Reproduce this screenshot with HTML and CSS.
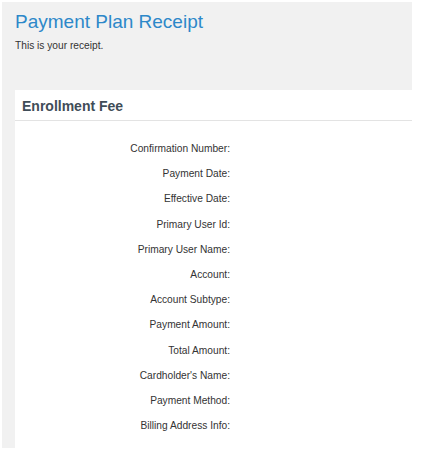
FILE: index.html
```html
<!DOCTYPE html>
<html lang="en">
<head>
  <meta charset="UTF-8">
  <title>Payment Plan Receipt</title>
  <link rel="stylesheet" href="styles.css">
</head>
<body>

  <div class="page">
    <h1>Payment Plan Receipt</h1>
    <p class="lead">This is your receipt.</p>

    <!-- receipt card -->
    <div class="card">
      <div class="card-head">Enrollment Fee</div>
      <div class="card-body">
        <div class="row"><span class="label">Confirmation Number:</span><span class="value"></span></div>
        <div class="row"><span class="label">Payment Date:</span><span class="value"></span></div>
        <div class="row"><span class="label">Effective Date:</span><span class="value"></span></div>
        <div class="row"><span class="label">Primary User Id:</span><span class="value"></span></div>
        <div class="row"><span class="label">Primary User Name:</span><span class="value"></span></div>
        <div class="row"><span class="label">Account:</span><span class="value"></span></div>
        <div class="row"><span class="label">Account Subtype:</span><span class="value"></span></div>
        <div class="row"><span class="label">Payment Amount:</span><span class="value"></span></div>
        <div class="row"><span class="label">Total Amount:</span><span class="value"></span></div>
        <div class="row"><span class="label">Cardholder's Name:</span><span class="value"></span></div>
        <div class="row"><span class="label">Payment Method:</span><span class="value"></span></div>
        <div class="row"><span class="label">Billing Address Info:</span><span class="value"></span></div>
      </div>
    </div>
  </div>

</body>
</html>
```

FILE: styles.css
```css
body {
  margin: 0;
  font-family: "Liberation Sans", Arial, sans-serif;
  background: #fff;
  color: #333;
}
.page {
  margin: 2px 15px 0 2px;
  padding: 8px 0 0 13px;
  height: 438px;
  background: #f1f1f1;
  overflow: hidden;
}
h1 {
  margin: 0;
  font-size: 19px;
  line-height: 24px;
  font-weight: normal;
  color: #2d88c9;
}
.lead {
  margin: 5px 0 37px;
  font-size: 10.2px;
  line-height: 14px;
  color: #333;
}
.card {
  background: #fff;
  min-height: 400px;
}
.card-head {
  padding: 6px 7px 4px;
  font-size: 14px;
  line-height: 20px;
  font-weight: bold;
  color: #3f4d58;
  border-bottom: 1px solid #e3e3e3;
}
.card-body {
  padding-top: 16px;
}
.row {
  display: grid;
  grid-template-columns: 215px 1fr;
  height: 25.2px;
  font-size: 10.2px;
  line-height: 24px;
  color: #333;
}
.label {
  text-align: right;
}
```
